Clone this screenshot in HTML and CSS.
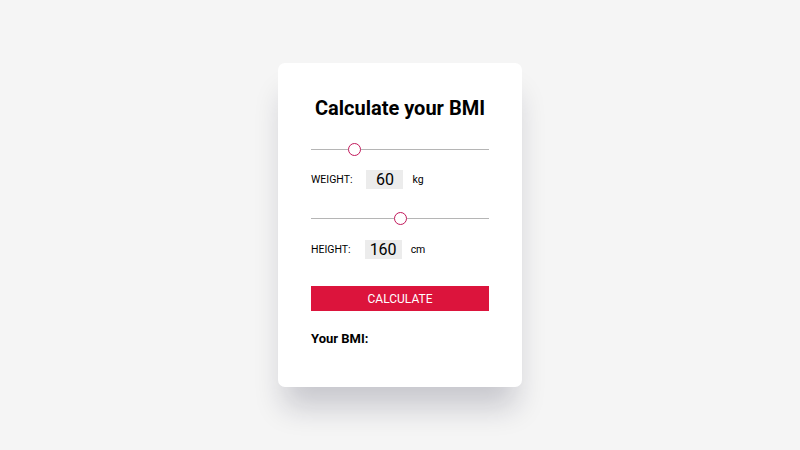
FILE: index.html
```html
<!DOCTYPE html>
<html lang="en">
<head>
    <meta charset="UTF-8">
    <meta name="viewport" content="width=device-width, initial-scale=1.0">
    <title>BMI Calculator</title>
    <link rel="stylesheet" href="styles.css">
</head>
<body>

    <div class="card">
        <h1>Calculate your BMI</h1>

        <input type="range" class="slider" id="weight-range" min="20" max="200" value="60">
        <div class="row">
            <label for="weight">WEIGHT:</label>
            <input type="text" class="value" id="weight" value="60">
            <span class="unit">kg</span>
        </div>

        <input type="range" class="slider" id="height-range" min="100" max="220" value="160">
        <div class="row">
            <label for="height">HEIGHT:</label>
            <input type="text" class="value" id="height" value="160">
            <span class="unit">cm</span>
        </div>

        <button id="calc">CALCULATE</button>

        <p class="result"><b>Your BMI:</b> <span id="bmi"></span></p>
    </div>

    <script>
        const wRange = document.getElementById("weight-range");
        const hRange = document.getElementById("height-range");
        const wInput = document.getElementById("weight");
        const hInput = document.getElementById("height");

        wRange.oninput = () => wInput.value = wRange.value;
        hRange.oninput = () => hInput.value = hRange.value;
        wInput.oninput = () => wRange.value = wInput.value;
        hInput.oninput = () => hRange.value = hInput.value;

        document.getElementById("calc").onclick = () => {
            let m = parseFloat(hInput.value) / 100;
            let bmi = parseFloat(wInput.value) / (m * m);
            document.getElementById("bmi").textContent = isNaN(bmi) ? "" : bmi.toFixed(1);
        };
    </script>

</body>
</html>
```

FILE: styles.css
```css
body {
    margin: 0;
    height: 100vh;
    display: flex;
    align-items: center;
    justify-content: center;
    background-color: #f5f5f5;
    font-family: Roboto, "Liberation Sans", sans-serif;
    color: #000;
}

.card {
    width: 244px;
    height: 324px;
    box-sizing: border-box;
    padding: 33px 33px 0;
    background-color: white;
    border-radius: 7px;
    box-shadow: 0 26px 30px -6px rgba(20, 20, 50, 0.2);
    display: flex;
    flex-direction: column;
}

h1 {
    margin: 0 0 22px;
    font-size: 20px;
    font-weight: 700;
    text-align: center;
    line-height: 24px;
}

.slider {
    -webkit-appearance: none;
    appearance: none;
    width: 100%;
    height: 14px;
    margin: 0;
    background: transparent;
}

.slider::-webkit-slider-runnable-track {
    height: 1px;
    background-color: #b5b5b5;
}

.slider::-webkit-slider-thumb {
    -webkit-appearance: none;
    width: 13px;
    height: 13px;
    margin-top: -6px;
    border-radius: 50%;
    border: 1.5px solid #c2185b;
    background-color: white;
    box-sizing: border-box;
    cursor: pointer;
}

.row {
    display: flex;
    align-items: center;
    margin: 14px 0 22px;
    font-size: 10.5px;
}

.row + .slider {
    margin-top: 0;
}

.row label {
    margin-right: 14px;
}

.value {
    width: 37px;
    height: 19px;
    padding: 0;
    border: none;
    background-color: #ececec;
    font-family: inherit;
    font-size: 16px;
    text-align: center;
    color: #000;
}

.unit {
    margin-left: 9px;
}

#height-range + .row {
    margin-top: 15px;
}

button {
    margin-top: 5px;
    height: 25px;
    border: none;
    background-color: #dc143c;
    color: white;
    font-family: inherit;
    font-size: 12px;
    cursor: pointer;
}

.result {
    margin: 20px 0 0;
    font-size: 13px;
}
```
